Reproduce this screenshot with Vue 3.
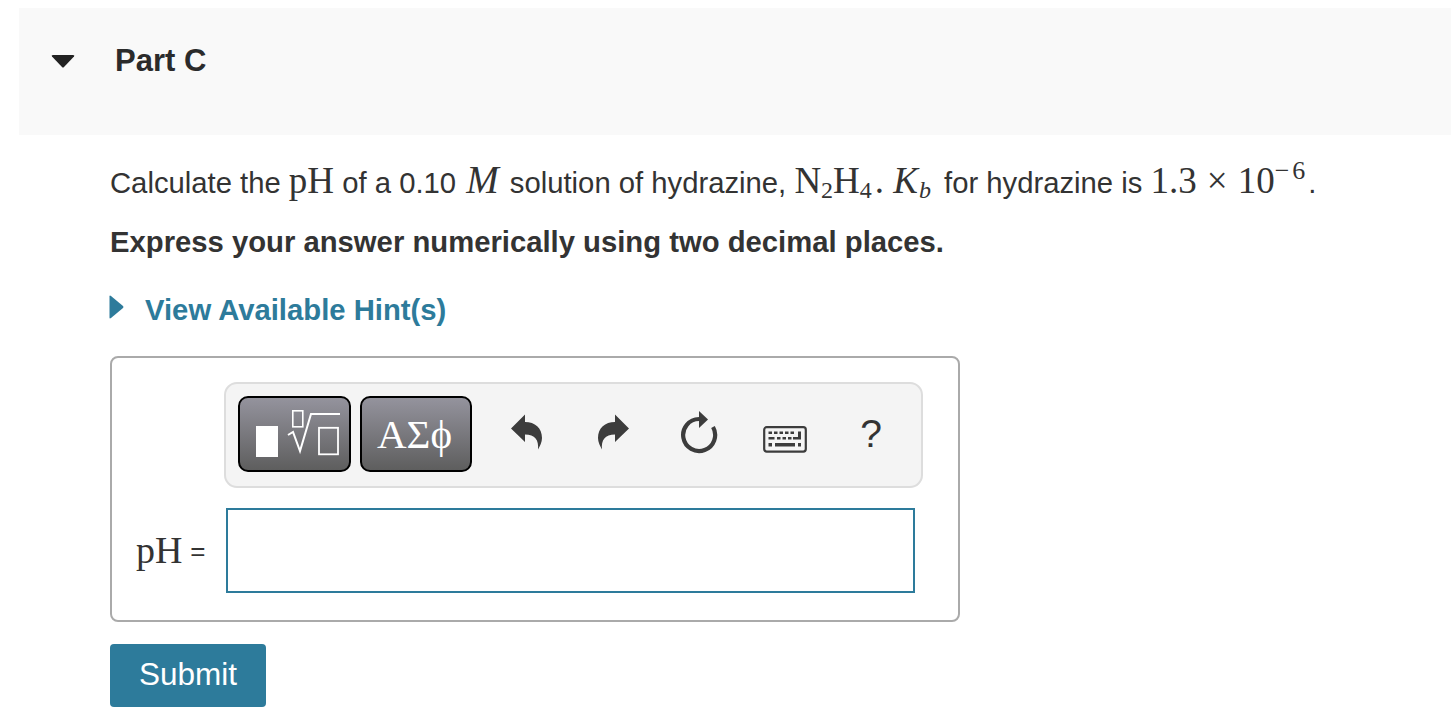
<script setup>
const tools = ['undo', 'redo', 'reset', 'keyboard', 'help']
</script>

<template>
  <main class="page">
    <header class="part-head">
      <svg class="caret-down" width="24" height="13" viewBox="0 0 24 13"><path d="M1 1.5Q0 0 2 0H22Q24 0 23 1.5L13 12Q12 13 11 12Z" fill="#222"/></svg>
      <h2 class="part-title">Part C</h2>
    </header>
    <section class="body">
      <p class="question">Calculate the <span class="m">pH</span> of a 0.10 <i class="m mi">M</i> solution of hydrazine, <span class="m chem">N<sub>2</sub>H<sub>4</sub><span class="dot">.</span></span> <span class="m kb"><i>K<sub>b</sub></i></span> for hydrazine is <span class="m">1.3<span class="times">×</span>10<sup>−6</sup></span>.</p>
      <p class="instruct">Express your answer numerically using two decimal places.</p>
      <div class="hint">
        <svg class="hint-caret" width="15" height="24" viewBox="0 0 15 24"><path d="M0.5 1.5Q0.5 0 2 1L14 11Q15 12 14 13L2 23Q0.5 24 0.5 22.5Z" fill="#2d7b9b"/></svg>
        <span>View Available Hint(s)</span>
      </div>
      <div class="answer">
        <div class="toolbar">
          <button class="tb-btn first">
            <svg width="109" height="72" viewBox="0 0 109 72">
              <rect x="16" y="28" width="22" height="31" fill="#fff"/>
              <rect x="52.8" y="12.8" width="10" height="16" fill="none" stroke="#fff" stroke-width="1.6"/>
              <path d="M48 37L53 34L60 53L71 16H100" fill="none" stroke="#fff" stroke-width="2"/>
              <rect x="79" y="29.8" width="19" height="26.5" fill="none" stroke="#fff" stroke-width="1.8"/>
            </svg>
          </button>
          <button class="tb-btn second">ΑΣϕ</button>
          <div class="icons">
            <span v-for="t in tools" :key="t" class="ico">
              <svg v-if="t === 'undo'" width="32" height="36" viewBox="0 0 32 36"><path d="M0 14.5L14 0.5V8C24 8 31 14 31 24C31 28 29 32 27 35.5C28 26 24 20.5 14 20.5V28Z" fill="#3c3c3c"/></svg>
              <svg v-else-if="t === 'redo'" width="32" height="36" viewBox="0 0 32 36"><path d="M32 14.5L18 0.5V8C8 8 1 14 1 24C1 28 3 32 5 35.5C4 26 8 20.500 18 20.500V28Z" fill="#3c3c3c"/></svg>
              <svg v-else-if="t === 'reset'" width="38" height="44" viewBox="0 0 38 44"><path d="M19 9A16 16 0 1 0 33 17" fill="none" stroke="#3c3c3c" stroke-width="4.2"/><path d="M19 1L28 9.5L19 18Z" fill="#3c3c3c"/></svg>
              <svg v-else-if="t === 'keyboard'" class="kbd" width="44" height="27" viewBox="0 0 44 27">
                <rect x="1.2" y="1.2" width="41.6" height="24.4" rx="2.5" fill="none" stroke="#3c3c3c" stroke-width="2.2"/>
                <path d="M5.500 5.500h3.500v2.500H5.500zM11 5.500h3.500v2.500H11zM16.500 5.500h3.500v2.500h-3.500zM22 5.500h3.500v2.500H22zM27.500 5.500h3.500v2.500h-3.500zM35 5.500h3v8h-8v-2.500h5zM5.500 11h6v2.500h-6zM14 11h3.500v2.500H14zM19.500 11h3.500v2.500h-3.500zM25 11h3.500v2.500H25zM5.500 17h3.500v3.500H5.500zM12 17h20v3.500H12zM35 17h3v3.500h-3z" fill="#3c3c3c"/>
              </svg>
              <span v-else class="q">?</span>
            </span>
          </div>
        </div>
        <div class="input-row">
          <label class="label"><span class="m ph">pH</span> <span class="eq">=</span></label>
          <div class="field"></div>
        </div>
      </div>
      <button class="submit">Submit</button>
    </section>
  </main>
</template>

<style scoped>
.page { width: 1451px; height: 726px; overflow: hidden; background: #fff; color: #333; font-family: "Liberation Sans", Arial, sans-serif; }
.part-head { margin: 8px 0 0 19px; height: 127px; background: #f9f9f9; display: flex; align-items: flex-start; }
.caret-down { margin: 47px 0 0 32px; }
.part-title { margin: 35px 0 0 40px; font-size: 31px; line-height: 36px; font-weight: 700; color: #2b2b2b; }
.body { padding-left: 110px; }
.question { margin: 25px 0 0; font-size: 29.25px; line-height: 46px; white-space: nowrap; height: 46px; }
.m { font-family: "Liberation Serif", serif; font-size: 37px; line-height: 0; }
.mi { font-style: italic; margin: 0 3px 0 2px; font-size: 39px; }
sub, sup { font-size: 24px; line-height: 0; }
sub { vertical-align: -5px; margin: 0 1px 0 1px; }
sup { font-size: 26px; vertical-align: 14px; letter-spacing: 3px; }
.chem sub { margin: 0; }
.dot { margin-left: 3px; }
.kb { margin-left: 1px; margin-right: 4px; }
.times { margin: 0 10px; }
.instruct { margin: 13px 0 0; font-size: 29.25px; font-weight: 700; line-height: 46px; }
.hint { margin-top: 22px; display: flex; align-items: center; gap: 21px; color: #2d7b9b; font-size: 29.25px; font-weight: 700; height: 46px; }
.hint-caret { margin: -7px 0 0 -1px; }
.answer { margin-top: 23px; width: 850px; height: 266px; box-sizing: border-box; border: 2px solid #aaa; border-radius: 8px; display: flex; flex-direction: column; }
.toolbar { margin: 24px 0 0 112px; width: 699px; height: 106px; box-sizing: border-box; background: #f4f4f4; border: 2px solid #ddd; border-radius: 13px; display: flex; align-items: center; padding: 0 0 2px 12px; gap: 9px; }
.tb-btn { flex: none; width: 113px; height: 76px; padding: 0; box-sizing: border-box; border: 2px solid #000; border-radius: 10px; background: linear-gradient(#94939d, #5e5e5e); color: #fff; display: flex; align-items: center; justify-content: center; }
.second { width: 112px; font-family: "Liberation Serif", serif; font-size: 41px; padding-right: 3px; }
.icons { display: flex; align-items: center; margin: -4px 0 0 3px; }
.ico { flex: none; width: 86px; display: flex; justify-content: center; align-items: center; color: #333; }
.kbd { margin-top: 14px; }
.q { font-size: 39px; line-height: 42px; margin-top: 4px; }
.input-row { display: flex; align-items: center; margin-top: 20px; }
.label { width: 114px; padding: 4px 0 0 24px; box-sizing: border-box; font-size: 28px; white-space: nowrap; }
.ph { font-size: 38px; }
.eq { font-size: 26px; vertical-align: 3px; }
.field { width: 689px; height: 85px; box-sizing: border-box; border: 2px solid #2d7b9b; background: #fff; }
.submit { display: block; margin-top: 22px; width: 156px; height: 63px; padding: 0 0 2px; border: 0; border-radius: 4px; background: #2d7b9b; color: #fff; font-family: inherit; font-size: 31.5px; }
</style>
